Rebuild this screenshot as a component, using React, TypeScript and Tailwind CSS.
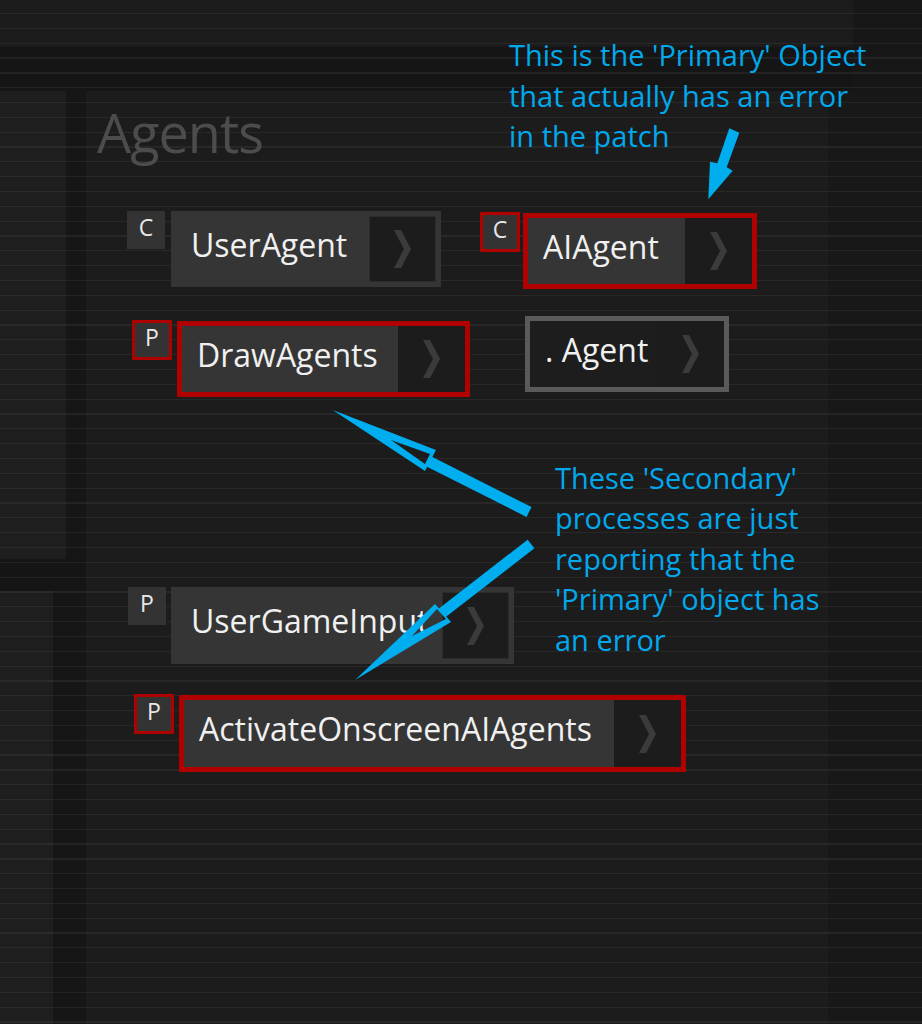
const lines =
  'bg-[image:repeating-linear-gradient(to_bottom,transparent_0px,transparent_13px,rgba(255,255,255,0.055)_13px,rgba(255,255,255,0.055)_14.2px,transparent_14.2px,transparent_14.83px)] bg-fixed';

function Chevron() {
  return (
    <svg width="17" height="38" viewBox="0 0 17 38">
      <polygon points="0,0 7,0 17,19 7,38 0,38 10,19" fill="#3b3b3b" />
    </svg>
  );
}

function Badge({ letter, error = false }: { letter: string; error?: boolean }) {
  return (
    <div
      className={`flex justify-center bg-[#333333] text-[23px] leading-none text-[#e8e8e8] ${
        error ? 'h-[40px] w-[40px] border-[3px] border-[#b10000] pt-[3px]' : 'h-[38px] w-[38px] pt-[5px]'
      }`}
    >
      {letter}
    </div>
  );
}

interface NodeProps {
  label: string;
  error?: boolean;
  ghost?: boolean;
  className?: string;
}

function Node({ label, error = false, ghost = false, className = '' }: NodeProps) {
  const frame = error ? 'border-[#b10000]' : ghost ? 'border-[#5a5a5a]' : 'border-[#353535]';
  const body = ghost ? 'bg-[#1d1d1d]' : 'bg-[#353535]';
  return (
    <div className={`flex border-[5px] ${frame} ${body} ${className}`}>
      <div className="flex-1 whitespace-nowrap pl-[15px] pt-[13px] text-[32px] font-medium leading-none text-[#f0f0f0]">
        {label}
      </div>
      <div
        className={`flex w-[67px] items-center justify-center bg-[#1c1c1c] ${
          error || ghost ? '' : 'border border-[#2c2c2c]'
        }`}
      >
        <Chevron />
      </div>
    </div>
  );
}

export default function App() {
  return (
    <div className="relative flex h-[1024px] w-[922px] flex-col overflow-hidden bg-[#1c1c1c] font-['Open_Sans',sans-serif]">
      {/* top strip */}
      <div className="flex h-[91px]">
        <div className="flex flex-1 flex-col">
          <div className={`h-[47px] bg-[#1c1c1c] ${lines}`} />
          <div className={`flex-1 bg-[#151515] ${lines}`} />
        </div>
        <div className={`w-[69px] bg-[#171717] ${lines}`} />
      </div>

      <div className="flex flex-1">
        {/* left gutter panels */}
        <div className="flex w-[86px] flex-col">
          <div className="flex h-[468px]">
            <div className={`w-[66px] bg-[#1e1e1e] ${lines}`} />
            <div className={`flex-1 bg-[#161616] ${lines}`} />
          </div>
          <div className={`h-[32px] bg-[#151515] ${lines}`} />
          <div className="flex flex-1">
            <div className={`w-[53px] bg-[#1e1e1e] ${lines}`} />
            <div className={`flex-1 bg-[#161616] ${lines}`} />
          </div>
        </div>

        {/* patch canvas */}
        <main className={`relative flex-1 bg-[#1c1c1c] ${lines}`}>
          <h1 className="pl-[11px] pt-[14px] text-[54px] font-normal leading-none tracking-[-1px] text-[#4c4c4c]">
            Agents
          </h1>

          <div className="absolute left-[41px] top-[120px] flex items-start gap-[6px]">
            <Badge letter="C" />
            <Node label="UserAgent" className="h-[76px] w-[270px]" />
          </div>

          <div className="absolute left-[394px] top-[121px] flex items-start gap-[3px]">
            <Badge letter="C" error />
            <Node label="AIAgent" error className="mt-[1px] h-[76px] w-[234px]" />
          </div>

          <div className="absolute left-[46px] top-[229px] flex items-start gap-[5px]">
            <Badge letter="P" error />
            <Node label="DrawAgents" error className="mt-[1px] h-[76px] w-[293px]" />
          </div>

          <div className="absolute left-[439px] top-[225px]">
            <Node label=". Agent" ghost className="h-[76px] w-[204px]" />
          </div>

          <div className="absolute left-[42px] top-[496px] flex items-start gap-[5px]">
            <Badge letter="P" />
            <Node label="UserGameInput" className="h-[77px] w-[343px]" />
          </div>

          <div className="absolute left-[48px] top-[603px] flex items-start gap-[5px]">
            <Badge letter="P" error />
            <Node label="ActivateOnscreenAIAgents" error className="mt-[1px] h-[77px] w-[507px]" />
          </div>
        </main>

        <div className={`w-[94px] bg-[#181818] ${lines}`} />
      </div>

      {/* annotations */}
      <div className="absolute left-[509px] top-[35px] text-[29px] leading-[40.5px] text-[#02a8ec]">
        <div>This is the 'Primary' Object</div>
        <div>that actually has an error</div>
        <div>in the patch</div>
      </div>
      <div className="absolute left-[555px] top-[458px] text-[29px] leading-[40.4px] text-[#02a8ec]">
        <div>These 'Secondary'</div>
        <div>processes are just</div>
        <div>reporting that the</div>
        <div>'Primary' object has</div>
        <div>an error</div>
      </div>

      <svg className="pointer-events-none absolute inset-0" width="922" height="1024" viewBox="0 0 922 1024">
        <g fill="#00aeef">
          <polygon points="729.3,128.3 739.3,132.7 726.7,167.3 732.7,170.7 708.3,199.3 710,161.7 717.3,163.3" />
          <path
            fillRule="evenodd"
            d="M332.7,410 L436,450 L425,471 Z M391,440 L430,454 L425,464 Z"
          />
          <polygon points="430.5,456.1 531.5,507.1 526.5,516.9 425.5,465.9" />
          <path
            fillRule="evenodd"
            d="M355,680 L435,604 L451,622 Z M412,636 L437,609 L446,619 Z"
          />
          <polygon points="534.4,548.3 527.6,539.7 438.6,608.7 445.4,617.3" />
        </g>
      </svg>
    </div>
  );
}
